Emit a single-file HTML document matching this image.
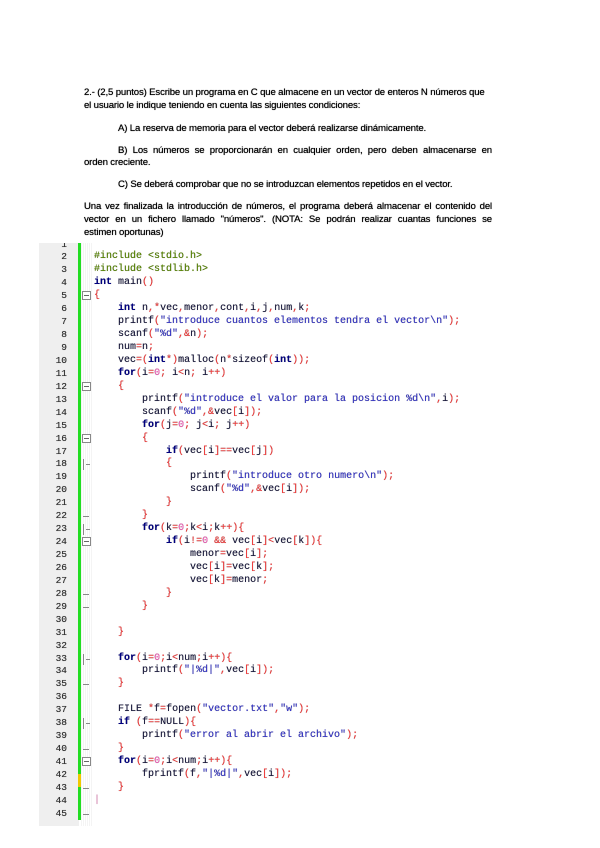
<!DOCTYPE html>
<html><head><meta charset="utf-8"><style>
body{margin:0;width:600px;height:848px;background:#fff;position:relative;overflow:hidden;font-family:"Liberation Sans",sans-serif;}
.t{position:absolute;left:84px;width:408px;font-size:9.6px;color:#000;white-space:nowrap;line-height:12px;letter-spacing:-0.15px;text-shadow:0 0 0.6px #000}
.j{text-align:justify;text-align-last:justify;white-space:normal}
#g{position:absolute;left:39px;top:243px;width:40px;height:583px;background:#efefef}
#bar{position:absolute;left:78px;top:243px;width:3px;height:577px;background:#22dd22}
#y{position:absolute;left:78px;top:774px;width:3px;height:13px;background:#f0c800}
#dots{position:absolute;left:81px;top:243px;width:12px;height:583px;background:repeating-linear-gradient(90deg,#f4f4f4 0 1px,#fff 1px 2px)}
#code{position:absolute;left:0;top:238.5px;font-family:"Liberation Mono",monospace;font-size:10px;color:#1a1a40;text-shadow:0 0 0.4px #333}
.l{position:relative;height:12.95px;line-height:12.95px;white-space:pre}
.num{position:absolute;left:39px;width:28px;text-align:right;color:#333;font-size:9.5px}
.c{position:absolute;left:94px}
.k{color:#000080;font-weight:bold}.s{color:#3535d0}.p{color:#ff3b3b}.n{color:#ff60c0}.d{color:#5a8a00}
.bx{position:absolute;left:82px;top:1px;width:9px;height:9px;border:1px solid #888;box-sizing:border-box;background:#fff}
.bx::after{content:"";position:absolute;left:1px;right:1px;top:3px;height:1px;background:#666}
.tm{position:absolute;left:83px;top:6px;width:6px;height:1px;background:#888}
.vl{position:absolute;left:83px;top:1px;width:1px;height:11px;background:#888}
.sh{position:absolute;left:86px;top:6px;width:4px;height:1px;background:#888}
</style></head><body>
<div class="t" style="top:87px">2.- (2,5 puntos) Escribe un programa en C que almacene en un vector de enteros N números que</div>
<div class="t" style="top:100px">el usuario le indique teniendo en cuenta las siguientes condiciones:</div>
<div class="t" style="top:123px;left:118px">A) La reserva de memoria para el vector deberá realizarse dinámicamente.</div>
<div class="t j" style="top:145px;left:118px;width:374px">B) Los números se proporcionarán en cualquier orden, pero deben almacenarse en</div>
<div class="t" style="top:157px">orden creciente.</div>
<div class="t" style="top:179px;left:118px">C) Se deberá comprobar que no se introduzcan elementos repetidos en el vector.</div>
<div class="t j" style="top:201px">Una vez finalizada la introducción de números, el programa deberá almacenar el contenido del</div>
<div class="t j" style="top:214px">vector en un fichero llamado "números". (NOTA: Se podrán realizar cuantas funciones se</div>
<div class="t" style="top:227px">estimen oportunas)</div>

<div id="g"></div><div id="dots"></div><div id="bar"></div><div id="y"></div>
<div style="position:absolute;left:0;top:243px;width:600px;height:585px;overflow:hidden">
<div id="code" style="top:-4.5px">
<div class="l"><span class="num">1</span></div>
<div class="l"><span class="num">2</span><span class="c"><span class="d">#include &lt;stdio.h&gt;</span></span></div>
<div class="l"><span class="num">3</span><span class="c"><span class="d">#include &lt;stdlib.h&gt;</span></span></div>
<div class="l"><span class="num">4</span><span class="c"><span class="k">int</span> main<span class="p">()</span></span></div>
<div class="l"><span class="num">5</span><span class="bx"></span><span class="c"><span class="p">{</span></span></div>
<div class="l"><span class="num">6</span><span class="c">    <span class="k">int</span> n<span class="p">,*</span>vec<span class="p">,</span>menor<span class="p">,</span>cont<span class="p">,</span>i<span class="p">,</span>j<span class="p">,</span>num<span class="p">,</span>k<span class="p">;</span></span></div>
<div class="l"><span class="num">7</span><span class="c">    printf<span class="p">(</span><span class="s">"introduce cuantos elementos tendra el vector\n"</span><span class="p">);</span></span></div>
<div class="l"><span class="num">8</span><span class="c">    scanf<span class="p">(</span><span class="s">"%d"</span><span class="p">,&amp;</span>n<span class="p">);</span></span></div>
<div class="l"><span class="num">9</span><span class="c">    num<span class="p">=</span>n<span class="p">;</span></span></div>
<div class="l"><span class="num">10</span><span class="c">    vec<span class="p">=(</span><span class="k">int</span><span class="p">*)</span>malloc<span class="p">(</span>n<span class="p">*</span>sizeof<span class="p">(</span><span class="k">int</span><span class="p">));</span></span></div>
<div class="l"><span class="num">11</span><span class="c">    <span class="k">for</span><span class="p">(</span>i<span class="p">=</span><span class="n">0</span><span class="p">;</span> i<span class="p">&lt;</span>n<span class="p">;</span> i<span class="p">++)</span></span></div>
<div class="l"><span class="num">12</span><span class="bx"></span><span class="c">    <span class="p">{</span></span></div>
<div class="l"><span class="num">13</span><span class="c">        printf<span class="p">(</span><span class="s">"introduce el valor para la posicion %d\n"</span><span class="p">,</span>i<span class="p">);</span></span></div>
<div class="l"><span class="num">14</span><span class="c">        scanf<span class="p">(</span><span class="s">"%d"</span><span class="p">,&amp;</span>vec<span class="p">[</span>i<span class="p">]);</span></span></div>
<div class="l"><span class="num">15</span><span class="c">        <span class="k">for</span><span class="p">(</span>j<span class="p">=</span><span class="n">0</span><span class="p">;</span> j<span class="p">&lt;</span>i<span class="p">;</span> j<span class="p">++)</span></span></div>
<div class="l"><span class="num">16</span><span class="bx"></span><span class="c">        <span class="p">{</span></span></div>
<div class="l"><span class="num">17</span><span class="c">            <span class="k">if</span><span class="p">(</span>vec<span class="p">[</span>i<span class="p">]==</span>vec<span class="p">[</span>j<span class="p">])</span></span></div>
<div class="l"><span class="num">18</span><span class="vl"></span><span class="sh"></span><span class="c">            <span class="p">{</span></span></div>
<div class="l"><span class="num">19</span><span class="c">                printf<span class="p">(</span><span class="s">"introduce otro numero\n"</span><span class="p">);</span></span></div>
<div class="l"><span class="num">20</span><span class="c">                scanf<span class="p">(</span><span class="s">"%d"</span><span class="p">,&amp;</span>vec<span class="p">[</span>i<span class="p">]);</span></span></div>
<div class="l"><span class="num">21</span><span class="c">            <span class="p">}</span></span></div>
<div class="l"><span class="num">22</span><span class="tm"></span><span class="c">        <span class="p">}</span></span></div>
<div class="l"><span class="num">23</span><span class="vl"></span><span class="sh"></span><span class="c">        <span class="k">for</span><span class="p">(</span>k<span class="p">=</span><span class="n">0</span><span class="p">;</span>k<span class="p">&lt;</span>i<span class="p">;</span>k<span class="p">++){</span></span></div>
<div class="l"><span class="num">24</span><span class="bx"></span><span class="c">            <span class="k">if</span><span class="p">(</span>i<span class="p">!=</span><span class="n">0</span> <span class="p">&amp;&amp;</span> vec<span class="p">[</span>i<span class="p">]&lt;</span>vec<span class="p">[</span>k<span class="p">]){</span></span></div>
<div class="l"><span class="num">25</span><span class="c">                menor<span class="p">=</span>vec<span class="p">[</span>i<span class="p">];</span></span></div>
<div class="l"><span class="num">26</span><span class="c">                vec<span class="p">[</span>i<span class="p">]=</span>vec<span class="p">[</span>k<span class="p">];</span></span></div>
<div class="l"><span class="num">27</span><span class="c">                vec<span class="p">[</span>k<span class="p">]=</span>menor<span class="p">;</span></span></div>
<div class="l"><span class="num">28</span><span class="tm"></span><span class="c">            <span class="p">}</span></span></div>
<div class="l"><span class="num">29</span><span class="tm"></span><span class="c">        <span class="p">}</span></span></div>
<div class="l"><span class="num">30</span></div>
<div class="l"><span class="num">31</span><span class="c">    <span class="p">}</span></span></div>
<div class="l"><span class="num">32</span></div>
<div class="l"><span class="num">33</span><span class="vl"></span><span class="sh"></span><span class="c">    <span class="k">for</span><span class="p">(</span>i<span class="p">=</span><span class="n">0</span><span class="p">;</span>i<span class="p">&lt;</span>num<span class="p">;</span>i<span class="p">++){</span></span></div>
<div class="l"><span class="num">34</span><span class="c">        printf<span class="p">(</span><span class="s">"|%d|"</span><span class="p">,</span>vec<span class="p">[</span>i<span class="p">]);</span></span></div>
<div class="l"><span class="num">35</span><span class="tm"></span><span class="c">    <span class="p">}</span></span></div>
<div class="l"><span class="num">36</span></div>
<div class="l"><span class="num">37</span><span class="c">    FILE <span class="p">*</span>f<span class="p">=</span>fopen<span class="p">(</span><span class="s">"vector.txt"</span><span class="p">,</span><span class="s">"w"</span><span class="p">);</span></span></div>
<div class="l"><span class="num">38</span><span class="vl"></span><span class="sh"></span><span class="c">    <span class="k">if</span> <span class="p">(</span>f<span class="p">==</span>NULL<span class="p">){</span></span></div>
<div class="l"><span class="num">39</span><span class="c">        printf<span class="p">(</span><span class="s">"error al abrir el archivo"</span><span class="p">);</span></span></div>
<div class="l"><span class="num">40</span><span class="tm"></span><span class="c">    <span class="p">}</span></span></div>
<div class="l"><span class="num">41</span><span class="bx"></span><span class="c">    <span class="k">for</span><span class="p">(</span>i<span class="p">=</span><span class="n">0</span><span class="p">;</span>i<span class="p">&lt;</span>num<span class="p">;</span>i<span class="p">++){</span></span></div>
<div class="l"><span class="num">42</span><span class="c">        fprintf<span class="p">(</span>f<span class="p">,</span><span class="s">"|%d|"</span><span class="p">,</span>vec<span class="p">[</span>i<span class="p">]);</span></span></div>
<div class="l"><span class="num">43</span><span class="tm"></span><span class="c">    <span class="p">}</span></span></div>
<div class="l"><span class="num">44</span><span class="c"><span class="p" style="color:#f8a0d0">|</span></span></div>
<div class="l"><span class="num">45</span><span class="tm"></span></div>
</div></div>
</body></html>
